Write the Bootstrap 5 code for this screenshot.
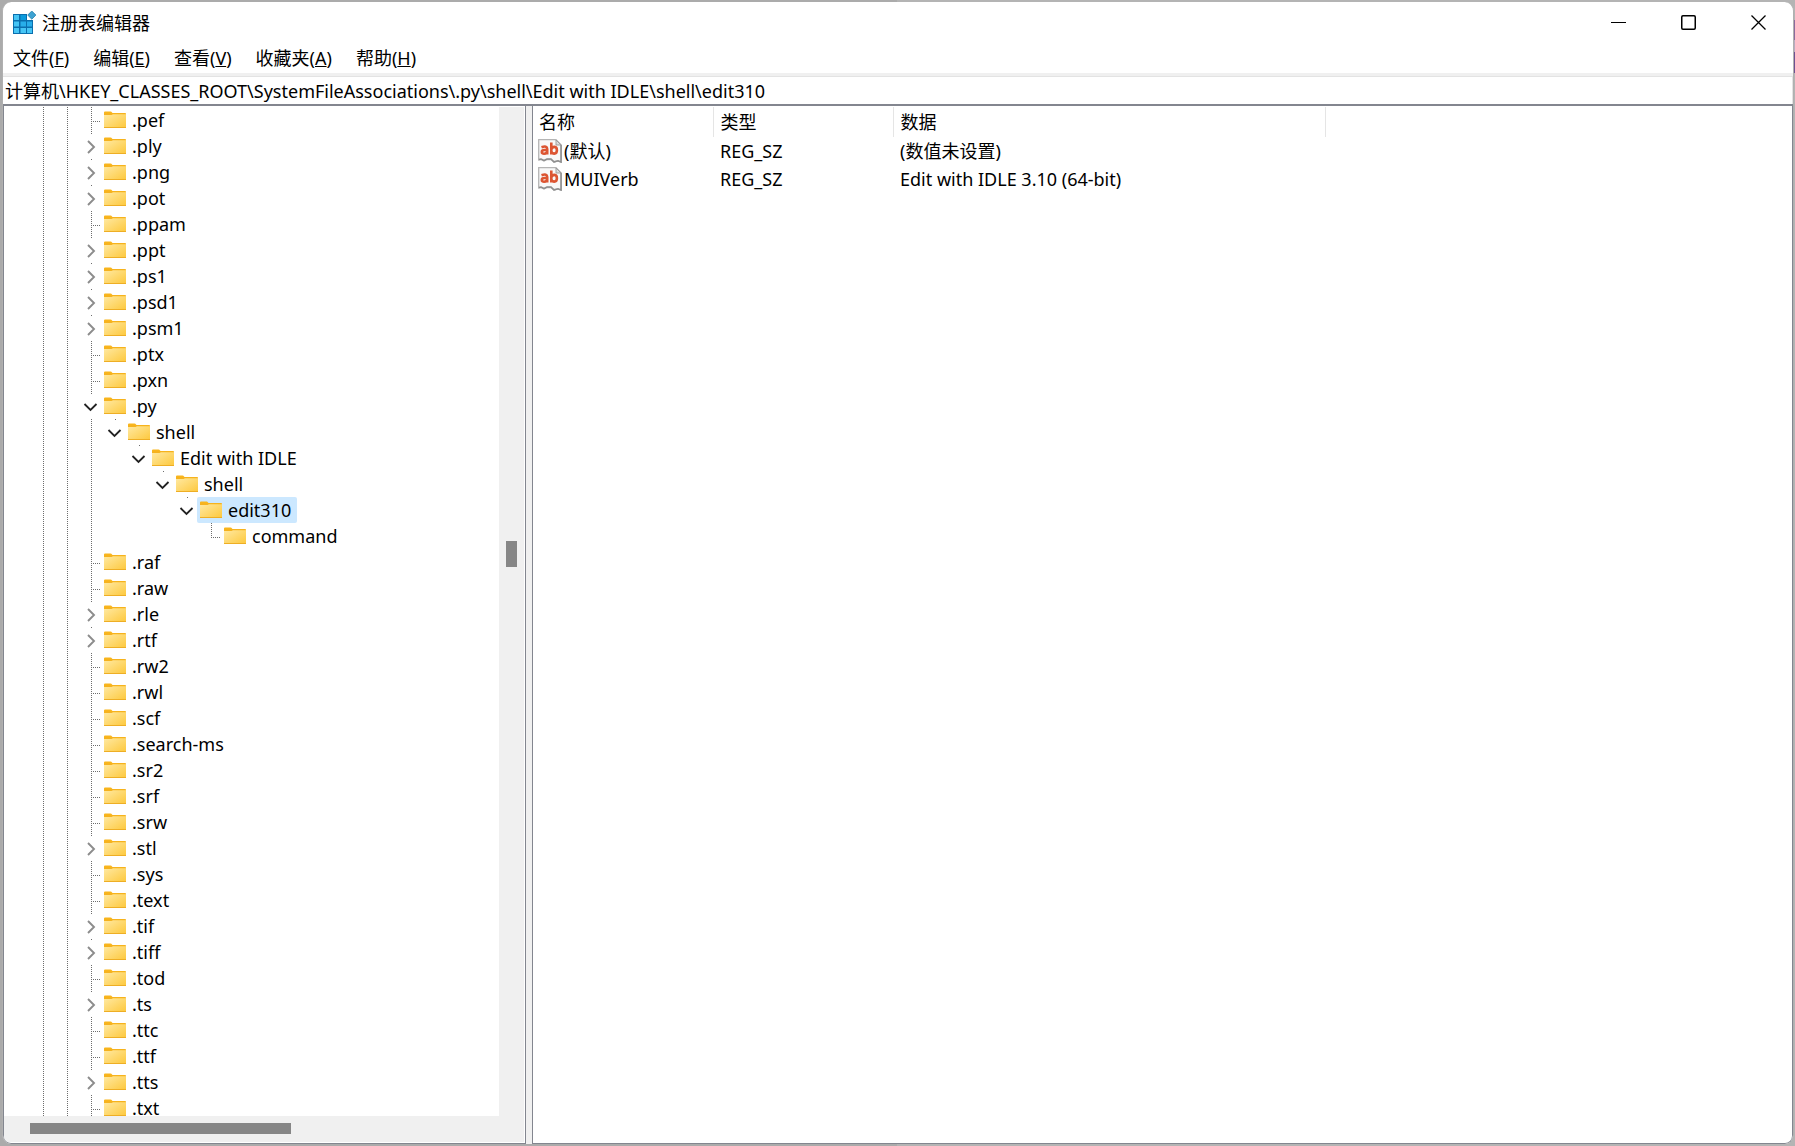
<!DOCTYPE html>
<html lang="zh-CN">
<head>
<meta charset="utf-8">
<meta name="viewport" content="width=device-width, initial-scale=1">
<title>注册表编辑器</title>
<link href="https://cdn.jsdelivr.net/npm/bootstrap@5.3.0/dist/css/bootstrap.min.css" rel="stylesheet">
<style>
:root{--edge:#83868f;--face:#f0f0f0}
body{font:18px/26px "Noto Sans","Noto Sans CJK SC",sans-serif;color:#000;height:100vh;padding:2px 1px 2px 2px;
  background:linear-gradient(90deg,#ababab 50%,transparent 50%),linear-gradient(#b4b4b4 0 20px,#8b6a9c 20px 40px,#b9aac0 40px 52px,#6e5091 52px 73px,#b4b4b4 73px)}
button,input{font:inherit;color:inherit}
.app-window{background:#fff;border-radius:9px;border:1px solid #b0b0b0;border-width:0 1px;height:100%}
.title-bar{height:41px;padding-left:10px}
.title-text{margin-left:6px}
.caption-btn{width:70px;border:0;background:none;padding:0}
.menu-bar{height:30px;padding-left:10px;gap:24px}
.menu-bar button{border:0;background:none;padding:0;line-height:30px}
.address-row{border-top:3px solid var(--face);border-bottom:2px solid var(--edge)}
.address-box{border:1px solid #e3e3e3;border-bottom:0;border-left:0;padding:0 0 1px 2px;height:28px;border-radius:0;outline:0}
.tree-pane{width:523px;border:1px solid var(--edge);border-top:0;border-bottom-left-radius:8px;padding:1px 1px 1px 0}
.tree-view{padding-left:25px}
.tree-row{height:26px;flex:none}
.guide{width:24px;flex:none;background:repeating-linear-gradient(#6d6d6d 0 1px,transparent 1px 2px) 14px 0/1px 100% no-repeat}
.guide-none{background:none}
.guide-leaf{background:repeating-linear-gradient(#6d6d6d 0 1px,transparent 1px 2px) 14px 0/1px 100% no-repeat,
  repeating-linear-gradient(90deg,#6d6d6d 0 1px,transparent 1px 2px) 14px 14px/10px 1px no-repeat}
.guide-end{background-size:1px 15px,10px 1px}
.expander{width:24px;flex:none;border:0;padding:0;display:flex;background:linear-gradient(#6d6d6d,#6d6d6d) 14px 0/1px 1px no-repeat}
.node-label{padding:0 6px 0 3px;gap:6px;border:0;background:none;border-radius:2px;white-space:nowrap}
.node-label.selected{background:#cce8ff}
.scroll-v{width:25px;background:var(--face);padding:434px 7px 0}
.scroll-h{height:26px;background:var(--face);padding:7px 0 0 26px}
.scroll-thumb{background:#868686}
.scroll-v .scroll-thumb{height:26px}
.scroll-h .scroll-thumb{width:261px;height:11px}
.splitter{width:6px;background:var(--face)}
.value-pane{border:1px solid var(--edge);border-top:0;border-bottom-right-radius:8px;min-width:0}
.value-list{table-layout:fixed;width:793px;margin-top:1px}
.value-list th{font-weight:400;height:30px;padding:0 0 0 7px;border-right:1px solid #e5e5e5}
.value-list td{height:28px;padding:0 0 0 7px;white-space:nowrap}
.value-list th:first-child{padding-left:6px}
.value-list td:first-child{padding-left:5px}
.value-list .name-cell{gap:2px}
</style>
</head>
<body>
<svg width="0" height="0" class="position-absolute" aria-hidden="true">
  <defs>
    <linearGradient id="gFolder" x1="0" y1="0" x2="1" y2="1"><stop offset="0" stop-color="#ffe9a2"/><stop offset="1" stop-color="#fdc83c"/></linearGradient>
    <symbol id="folder" viewBox="0 0 22 18">
      <path d="M0 1.500Q0 .5 1 .5H6.500Q7.500 .5 8 1.500L8.500 2H21.500V4H0Z" fill="#f9b51c"/>
      <rect x="0" y="3" width="22" height="14" rx=".6" fill="url(#gFolder)"/>
      <path d="M0 4V2.500H8L9 2.200H21.800V3.200H9L7.500 4Z" fill="#f5b21e"/>
      <rect x="0" y="16" width="22" height="1" fill="#eeae25"/>
    </symbol>
    <symbol id="strval" viewBox="0 0 24 24">
      <path d="M.7.7H18L23.300 6V23.300L20 22 16 23.300 13 20.500H9L6 22 3 20.500.7 21Z" fill="#f8f8f8" stroke="#b5b5b5" stroke-width="1.300"/>
      <path d="M23 6V23L20 21.800 16 22.800 13 20H9L6 21.500 3 20 1 20.500" fill="none" stroke="#8f8f8f" stroke-width="1.500"/>
      <path d="M18 1V6H23Z" fill="#ddd" stroke="#999" stroke-width=".9"/>
      <g fill="none" stroke="#dc5532" stroke-width="2.600">
        <path d="M3.500 8.200Q9.200 6.200 9.200 10V15.500M9.200 11H6.500Q3.800 11 3.800 12.900T6.200 14.700Q9.200 14.700 9.200 12"/>
        <path d="M13.300 3.500V15.500M13.300 10.500Q14 7.900 16.300 7.900 18.900 7.900 18.900 11.200T16.300 14.600Q14 14.600 13.300 12.500"/>
      </g>
    </symbol>
  </defs>
</svg>

<div class="app-window d-flex flex-column overflow-hidden">
  <header class="title-bar d-flex align-items-center flex-shrink-0">
    <svg width="23" height="24" viewBox="0 0 23 24" aria-hidden="true">
      <path d="M0 3H14V9H20V23H0Z" fill="#0a6fae"/>
      <g fill="#46c5f5"><path d="M1 4h5v5H1zM1 10.500h5v5H1zM1 17h5v5H1zM7.500 17h5.500v5H7.500zM14 17h5v5h-5z"/></g>
      <g fill="#0c9bdc"><path d="M7.500 4H13v5H7.500z"/></g>
      <g fill="#28aeea"><path d="M7.500 10.500H13v5H7.500zM14 10.500h5v5h-5z"/></g>
      <path d="M18.800 0 22.900 4.100 18.800 8.200 14.700 4.100Z" fill="#3da2d2" stroke="#2580ab" stroke-width=".8"/>
    </svg>
    <span class="title-text">注册表编辑器</span>
    <div class="d-flex ms-auto align-self-stretch">
      <button class="caption-btn" type="button" aria-label="最小化"><svg width="15" height="15" class="d-block mx-auto"><path d="M0 7.500H15" stroke="#000"/></svg></button>
      <button class="caption-btn" type="button" aria-label="最大化"><svg width="15" height="15" class="d-block mx-auto"><rect x=".75" y=".75" width="13.500" height="13.500" rx="1.200" fill="none" stroke="#000" stroke-width="1.500"/></svg></button>
      <button class="caption-btn" type="button" aria-label="关闭"><svg width="15" height="15" class="d-block mx-auto"><path d="M.5.5 14.500 14.500M14.500.5.5 14.500" stroke="#000" stroke-width="1.300"/></svg></button>
    </div>
  </header>

  <nav class="menu-bar d-flex flex-shrink-0" aria-label="菜单">
    <button type="button">文件(<u>F</u>)</button>
    <button type="button">编辑(<u>E</u>)</button>
    <button type="button">查看(<u>V</u>)</button>
    <button type="button">收藏夹(<u>A</u>)</button>
    <button type="button">帮助(<u>H</u>)</button>
  </nav>

  <div class="address-row flex-shrink-0">
    <input class="address-box d-block w-100" type="text" aria-label="地址" value="计算机\HKEY_CLASSES_ROOT\SystemFileAssociations\.py\shell\Edit with IDLE\shell\edit310">
  </div>

  <main class="d-flex flex-grow-1 overflow-hidden">
    <section class="tree-pane d-flex flex-column flex-shrink-0 overflow-hidden" aria-label="注册表项">
      <div class="d-flex flex-grow-1 overflow-hidden">
        <div id="tree" class="tree-view flex-grow-1 overflow-hidden" role="tree"></div>
        <div class="scroll-v flex-shrink-0"><div class="scroll-thumb"></div></div>
      </div>
      <div class="scroll-h flex-shrink-0"><div class="scroll-thumb"></div></div>
    </section>
    <div class="splitter flex-shrink-0"></div>
    <section class="value-pane flex-grow-1 overflow-hidden" aria-label="值">
      <table class="value-list">
        <colgroup><col style="width:180px"><col style="width:180px"><col></colgroup>
        <thead><tr><th>名称</th><th>类型</th><th>数据</th></tr></thead>
        <tbody>
          <tr><td><div class="name-cell d-flex align-items-center"><svg width="24" height="24" aria-hidden="true"><use href="#strval"/></svg><span>(默认)</span></div></td><td>REG_SZ</td><td>(数值未设置)</td></tr>
          <tr><td><div class="name-cell d-flex align-items-center"><svg width="24" height="24" aria-hidden="true"><use href="#strval"/></svg><span>MUIVerb</span></div></td><td>REG_SZ</td><td>Edit with IDLE 3.10 (64-bit)</td></tr>
        </tbody>
      </table>
    </section>
  </main>
</div>

<script>
// Each entry: expander state ("" leaf, ">" collapsed, "v" expanded), name, depth
const keys = [
  ["", ".pef"], [">", ".ply"], [">", ".png"], [">", ".pot"], ["", ".ppam"], [">", ".ppt"], [">", ".ps1"], [">", ".psd1"], [">", ".psm1"],
  ["", ".ptx"], ["", ".pxn"], ["v", ".py"], ["v", "shell", 1], ["v", "Edit with IDLE", 2], ["v", "shell", 3], ["v", "edit310", 4], ["", "command", 5],
  ["", ".raf"], ["", ".raw"], [">", ".rle"], [">", ".rtf"], ["", ".rw2"], ["", ".rwl"], ["", ".scf"], ["", ".search-ms"], ["", ".sr2"], ["", ".srf"],
  ["", ".srw"], [">", ".stl"], ["", ".sys"], ["", ".text"], [">", ".tif"], [">", ".tiff"], ["", ".tod"], [">", ".ts"], ["", ".ttc"], ["", ".ttf"],
  [">", ".tts"], ["", ".txt"]
];
const chevrons = {
  ">": '<svg width="24" height="26" aria-hidden="true"><path d="M11 8 17 14 11 20" fill="none" stroke="#8c8c8c" stroke-width="1.900"/></svg>',
  "v": '<svg width="24" height="26" aria-hidden="true"><path d="M7.500 11 13.500 17 19.500 11" fill="none" stroke="#222" stroke-width="1.800"/></svg>'
};
document.getElementById("tree").innerHTML = keys.map(([state, name, depth = 0]) => {
  let cells = '<span class="guide"></span><span class="guide"></span>';
  for (let i = 0; i < depth; i++) cells += `<span class="guide${i ? " guide-none" : ""}"></span>`;
  cells += state
    ? `<button type="button" class="expander" aria-label="${state === "v" ? "折叠" : "展开"} ${name}">${chevrons[state]}</button>`
    : `<span class="guide guide-leaf${depth ? " guide-end" : ""}"></span>`;
  const selected = name === "edit310";
  return `<div class="tree-row d-flex" role="treeitem" aria-selected="${selected}">${cells}<button type="button" class="node-label d-flex align-items-center${selected ? " selected" : ""}"><svg width="22" height="18" aria-hidden="true"><use href="#folder"/></svg>${name}</button></div>`;
}).join("");
</script>
<script src="https://cdn.jsdelivr.net/npm/bootstrap@5.3.0/dist/js/bootstrap.bundle.min.js"></script>
</body>
</html>
